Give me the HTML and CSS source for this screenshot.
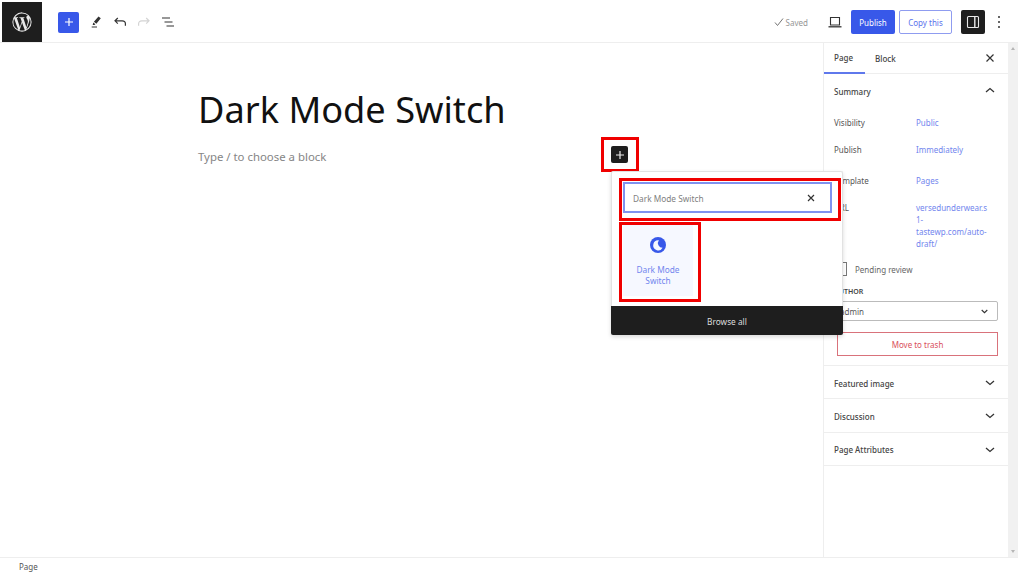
FILE: index.html
```html
<!DOCTYPE html>
<html lang="en">
<head>
    <meta charset="UTF-8">
    <title>Dark Mode Switch</title>
    <link rel="stylesheet" href="styles.css">
</head>
<body>

<div class="editor">
    <header class="topbar">
        <div class="wp-logo">
            <svg width="22" height="22" viewBox="0 0 24 24"><path fill="#e8e8e8" d="M12 1.5a10.5 10.5 0 1 0 0 21 10.5 10.5 0 0 0 0-21zM2.6 12c0-1.4.3-2.7.8-3.8l4.5 12.3A9.4 9.4 0 0 1 2.6 12zm9.4 9.4c-.9 0-1.8-.1-2.7-.4l2.8-8.2 2.9 8c0 .1 0 .1.1.1-1 .3-2 .5-3.1.5zm1.3-13.8c.6 0 1.1-.1 1.1-.1.5-.1.4-.8-.1-.8 0 0-1.5.1-2.5.1-.9 0-2.4-.1-2.4-.1-.5 0-.6.8-.1.8 0 0 .5.1 1 .1l1.4 3.9-2 6.1L6.4 7.6c.6 0 1.1-.1 1.1-.1.5-.1.5-.8 0-.8 0 0-1.5.1-2.5.1h-.6A9.4 9.4 0 0 1 12 2.6c2.5 0 4.7.9 6.4 2.5h-.1c-.9 0-1.6.8-1.6 1.7 0 .8.5 1.4 1 2.2.3.6.7 1.4.7 2.5 0 .8-.3 1.7-.7 3l-.9 3.1-3.5-10.5zm3.4 12.6 2.9-8.3c.5-1.3.7-2.4.7-3.3 0-.3 0-.6-.1-.9a9.4 9.4 0 0 1-3.5 12.5z"/></svg>
        </div>
        <div class="tools">
            <button class="add-btn">
                <svg width="10" height="10" viewBox="0 0 10 10"><path d="M5 1v8M1 5h8" stroke="#fff" stroke-width="1.2"/></svg>
            </button>
            <svg class="tool" width="16" height="16" viewBox="0 0 16 16"><path fill="#333" d="M10.5 2.5l2.3 1.800-4.400 5.400-2.500-1.900zM5.300 8.600l2.100 1.600-1 .8H4.700zM3.700 12.400h5.300v1.100H3.700z"/></svg>
            <svg class="tool" width="16" height="16" viewBox="0 0 16 16" fill="none" stroke="#333" stroke-width="1.2"><path d="M5.800 4L3 6.800l2.800 2.800M3.200 6.800h7c2 0 3.200 1.200 3.200 3v2"/></svg>
            <svg class="tool" width="16" height="16" viewBox="0 0 16 16" fill="none" stroke="#d4d4d4" stroke-width="1.2"><path d="M10.200 4L13 6.800l-2.800 2.800M12.800 6.800h-7c-2 0-3.200 1.200-3.200 3v2"/></svg>
            <svg class="tool" width="16" height="16" viewBox="0 0 16 16" fill="#333"><path d="M2 3.500h8v1.100H2zM4.500 7.500h8v1.100h-8zM6.500 11.500H14v1.100H6.500z"/></svg>
        </div>
        <div class="actions">
            <span class="saved">
                <svg width="10" height="10" viewBox="0 0 10 10" fill="none" stroke="#757575" stroke-width="1"><path d="M1 5.500l2.500 3L9 1.500"/></svg>
                Saved
            </span>
            <svg class="laptop" width="16" height="16" viewBox="0 0 16 16" fill="none" stroke="#333" stroke-width="1.1"><path d="M3.500 3.500h9v7.500h-9z"/><path d="M1.500 12.800h13" stroke-width="1.3"/></svg>
            <button class="publish">Publish</button>
            <button class="copy">Copy this</button>
            <button class="settings">
                <svg width="14" height="14" viewBox="0 0 14 14" fill="none" stroke="#e8e8e8" stroke-width="1.1"><rect x="1.500" y="1.500" width="11" height="11" rx="1"/><path d="M8.800 1.500v11" stroke-width="1.4"/></svg>
            </button>
            <svg class="more" width="4" height="14" viewBox="0 0 4 14" fill="#333"><circle cx="2" cy="2" r="1"/><circle cx="2" cy="7" r="1"/><circle cx="2" cy="12" r="1"/></svg>
        </div>
    </header>

    <div class="main">
        <main class="canvas">
            <h1 class="post-title">Dark Mode Switch</h1>
            <p class="placeholder">Type / to choose a block</p>

            <button class="inline-add">
                <svg width="10" height="10" viewBox="0 0 10 10"><path d="M5 1v8M1 5h8" stroke="#eee" stroke-width="1.2"/></svg>
            </button>
            <div class="mark mark-add"></div>

            <div class="inserter">
                <div class="search-row">
                    <div class="search">
                        <span>Dark Mode Switch</span>
                        <svg width="10" height="10" viewBox="0 0 10 10"><path d="M2 2l6 6M8 2l-6 6" stroke="#333" stroke-width="1.2"/></svg>
                    </div>
                </div>
                <div class="results">
                    <div class="block-item">
                        <svg width="16" height="16" viewBox="0 0 16 16"><circle cx="8" cy="8" r="8" fill="#3858e9"/><path fill="#f6f8ff" d="M8.900 3.300a5 5 0 1 0 3.700 7.400A4.600 4.600 0 0 1 8.900 3.300z"/></svg>
                        <span>Dark Mode Switch</span>
                    </div>
                </div>
                <div class="browse-all">Browse all</div>
                <div class="mark mark-search"></div>
                <div class="mark mark-item"></div>
            </div>
        </main>

        <aside class="sidebar">
            <div class="tabs">
                <span class="tab active">Page</span>
                <span class="tab">Block</span>
                <svg class="tabs-close" width="10" height="10" viewBox="0 0 10 10"><path d="M1.500 1.500l7 7M8.500 1.500l-7 7" stroke="#333" stroke-width="1.2"/></svg>
            </div>

            <section class="panel summary">
                <div class="panel-head">
                    <span>Summary</span>
                    <svg class="chevron-up" width="12" height="8" viewBox="0 0 12 8" fill="none" stroke="#333" stroke-width="1.3"><path d="M2 6l4-3.500L10 6"/></svg>
                </div>
                <div class="row row-visibility"><span class="row-label">Visibility</span><a class="row-value">Public</a></div>
                <div class="row row-publish"><span class="row-label">Publish</span><a class="row-value">Immediately</a></div>
                <div class="row row-template"><span class="row-label">Template</span><a class="row-value">Pages</a></div>
                <div class="row row-url"><span class="row-label">URL</span><a class="row-value">versedunderwear.s<br>1-<br>tastewp.com/auto-<br>draft/</a></div>
                <label class="pending"><span class="checkbox"></span>Pending review</label>
                <div class="author-label">AUTHOR</div>
                <div class="author-select">
                    <span>admin</span>
                    <svg width="7" height="5" viewBox="0 0 7 5" fill="none" stroke="#333" stroke-width="1.1"><path d="M.7 1l2.800 2.700L6.300 1"/></svg>
                </div>
                <button class="trash">Move to trash</button>
            </section>

            <section class="panel closed">
                <div class="panel-head"><span>Featured image</span><svg width="12" height="8" viewBox="0 0 12 8" fill="none" stroke="#333" stroke-width="1.3"><path d="M2 2l4 3.500L10 2"/></svg></div>
            </section>
            <section class="panel closed">
                <div class="panel-head"><span>Discussion</span><svg width="12" height="8" viewBox="0 0 12 8" fill="none" stroke="#333" stroke-width="1.3"><path d="M2 2l4 3.500L10 2"/></svg></div>
            </section>
            <section class="panel closed">
                <div class="panel-head"><span>Page Attributes</span><svg width="12" height="8" viewBox="0 0 12 8" fill="none" stroke="#333" stroke-width="1.3"><path d="M2 2l4 3.500L10 2"/></svg></div>
            </section>
        </aside>

        <div class="scrollbar">
            <span class="arrow-up"></span>
            <span class="arrow-down"></span>
        </div>
    </div>

    <footer class="statusbar">Page</footer>
</div>

</body>
</html>
```

FILE: styles.css
```css
* {
    box-sizing: border-box;
}

body {
    margin: 0;
    background: #fff;
    font-family: "Noto Sans", sans-serif;
    color: #1e1e1e;
}

button {
    font-family: inherit;
    border: none;
    padding: 0;
}

.editor {
    width: 1018px;
    height: 573px;
    display: flex;
    flex-direction: column;
}

/* top bar */
.topbar {
    height: 43px;
    flex-shrink: 0;
    display: flex;
    align-items: center;
    border-bottom: 1px solid #eeeeee;
    padding: 2px 0 0 2px;
}

.wp-logo {
    width: 40px;
    height: 40px;
    background: #1e1e1e;
    display: flex;
    align-items: center;
    justify-content: center;
}

.tools {
    display: flex;
    align-items: center;
    margin-left: 16px;
    gap: 8px;
}

.add-btn {
    width: 21px;
    height: 21px;
    background: #3858e9;
    border-radius: 2px;
    display: flex;
    align-items: center;
    justify-content: center;
    margin-right: 1px;
}

.tool {
    display: block;
}

.actions {
    margin-left: auto;
    display: flex;
    align-items: center;
    height: 24px;
}

.saved {
    display: flex;
    align-items: center;
    gap: 2px;
    font-size: 8px;
    color: #969696;
    margin-right: 19px;
}

.laptop {
    margin-right: 8px;
}

.publish {
    width: 44px;
    height: 24px;
    background: #3858e9;
    color: #fff;
    font-size: 8px;
    border-radius: 2px;
    margin-right: 4px;
}

.copy {
    width: 53px;
    height: 24px;
    background: #fff;
    color: #5a72ec;
    font-size: 8px;
    border: 1px solid #8f9cf0;
    border-radius: 2px;
    margin-right: 9px;
}

.settings {
    width: 24px;
    height: 24px;
    background: #1e1e1e;
    border-radius: 2px;
    display: flex;
    align-items: center;
    justify-content: center;
    margin-right: 12px;
}

.more {
    margin-right: 17px;
}

/* body of the editor */
.main {
    flex: 1;
    display: flex;
    min-height: 0;
}

.canvas {
    flex: 1;
    position: relative;
    padding: 42px 0 0 198px;
}

.post-title {
    margin: 0;
    font-size: 36.2px;
    font-weight: 400;
    line-height: 48px;
    color: #111;
}

.placeholder {
    margin: 16px 0 0;
    font-size: 11.4px;
    line-height: 16px;
    color: #858585;
}

.inline-add {
    position: absolute;
    left: 611px;
    top: 103px;
    width: 17px;
    height: 17px;
    background: #1e1e1e;
    border-radius: 2px;
    display: flex;
    align-items: center;
    justify-content: center;
}

.mark {
    position: absolute;
    border: 3px solid #f00000;
}

.mark-add {
    left: 601px;
    top: 94px;
    width: 38px;
    height: 35px;
}

.inserter {
    position: absolute;
    left: 611px;
    top: 128px;
    width: 232px;
    height: 164px;
    background: #fff;
    border: 1px solid #e2e2e2;
    border-bottom: none;
    border-radius: 2px;
    box-shadow: 0 2px 4px rgba(0, 0, 0, 0.15);
    z-index: 2;
    display: flex;
    flex-direction: column;
}

.search-row {
    padding: 10px 10px 0 11px;
}

.search {
    height: 31px;
    border: 2px solid #7f92ef;
    padding: 1px 14px 0 8px;
    display: flex;
    align-items: center;
    justify-content: space-between;
    font-size: 8.3px;
    color: #808080;
}

.results {
    flex: 1;
    padding: 11px 0 0 11px;
}

.block-item {
    width: 70px;
    height: 72px;
    background: #f6f8ff;
    color: #7286ee;
    font-size: 8.3px;
    line-height: 11px;
    text-align: center;
    display: flex;
    flex-direction: column;
    align-items: center;
    padding: 13px 10px 0;
}

.block-item span {
    margin-top: 11px;
}

.browse-all {
    height: 29px;
    margin: 0 -1px;
    padding-top: 2px;
    background: #1e1e1e;
    color: #ddd;
    font-size: 8.3px;
    display: flex;
    align-items: center;
    justify-content: center;
    border-radius: 0 0 2px 2px;
}

.mark-search {
    left: 7px;
    top: 6px;
    width: 222px;
    height: 43px;
}

.mark-item {
    left: 7px;
    top: 50px;
    width: 82px;
    height: 80px;
}

/* right sidebar */
.sidebar {
    width: 185px;
    flex-shrink: 0;
    border-left: 1px solid #eeeeee;
    font-size: 8px;
}

.tabs {
    height: 31px;
    display: flex;
    align-items: center;
    border-bottom: 1px solid #eeeeee;
    font-weight: 500;
}

.tab {
    height: 31px;
    padding: 0 10px;
    display: flex;
    align-items: center;
    color: #444;
}

.tab.active {
    width: 41px;
    border-bottom: 2px solid #5f78ec;
}

.tabs-close {
    margin-left: auto;
    margin-right: 13px;
}

.panel {
    border-bottom: 1px solid #eeeeee;
    padding: 0 10px;
}

.panel-head {
    height: 32px;
    display: flex;
    align-items: center;
    justify-content: space-between;
    font-weight: 500;
    color: #444;
    padding-right: 2px;
}

.closed {
    height: 33.33px;
    padding-top: 1px;
}

.summary {
    height: 292px;
}

.summary .panel-head {
    height: 34px;
}

.chevron-up {
    margin-bottom: 3px;
}

.row {
    display: flex;
    color: #555;
    line-height: 12px;
}

.row-label {
    width: 82px;
    flex-shrink: 0;
}

.row-value {
    color: #7286ee;
}

.row-visibility {
    margin-top: 9px;
}

.row-publish {
    margin-top: 15px;
}

.row-template {
    margin-top: 19px;
}

.row-url {
    margin-top: 15px;
}

.pending {
    display: flex;
    align-items: center;
    color: #666;
    margin-top: 12px;
    gap: 8px;
    height: 14px;
}

.checkbox {
    width: 13px;
    height: 14px;
    border: 1px solid #777;
}

.author-label {
    font-size: 7px;
    font-weight: 600;
    margin-top: 11px;
    color: #444;
}

.author-select {
    margin: 5px 0 0 3px;
    height: 20px;
    border: 1px solid #bbb;
    border-radius: 2px;
    padding: 0 9px 0 2px;
    display: flex;
    align-items: center;
    justify-content: space-between;
    color: #555;
}

.trash {
    display: block;
    width: 161px;
    height: 24px;
    margin: 11px 0 0 3px;
    background: #fff;
    border: 1px solid #d9727b;
    color: #d9505c;
    font-size: 8px;
}

.scrollbar {
    width: 10px;
    flex-shrink: 0;
    background: #f1f1f1;
    display: flex;
    flex-direction: column;
    align-items: center;
    justify-content: space-between;
    padding: 4px 0;
}

.arrow-up {
    border: 2px solid transparent;
    border-top: none;
    border-bottom: 3px solid #b5b5b5;
}

.arrow-down {
    border: 2px solid transparent;
    border-bottom: none;
    border-top: 3px solid #b5b5b5;
}

/* bottom bar */
.statusbar {
    height: 16px;
    flex-shrink: 0;
    border-top: 1px solid #eeeeee;
    padding-left: 19px;
    font-size: 8px;
    line-height: 18px;
    color: #555;
}
```
